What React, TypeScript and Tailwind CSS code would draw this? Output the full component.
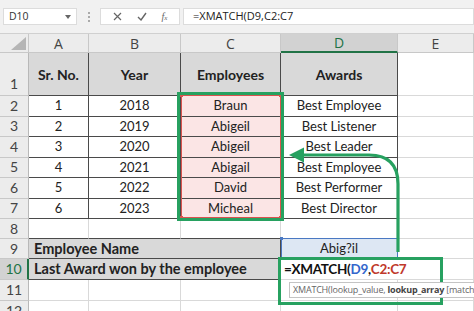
import React from "react"

const data = [
  ["1", "2018", "Braun", "Best Employee"],
  ["2", "2019", "Abigeil", "Best Listener"],
  ["3", "2020", "Abigeil", "Best Leader"],
  ["4", "2021", "Abigail", "Best Employee"],
  ["5", "2022", "David", "Best Performer"],
  ["6", "2023", "Micheal", "Best Director"],
]

const dark = "border-[#4a4a4a]"
const grid = "border-[#d9d9d9]"

function RowHead({ n, active = false, bottom = false }: { n: string; active?: boolean; bottom?: boolean }) {
  return (
    <div
      className={`flex justify-center text-[14px] leading-none font-['Lato',sans-serif] border-b border-[#c8c8c8] ${
        bottom ? "items-end pb-[4px]" : "items-center"
      } ${active ? "bg-[#d2d2d2] text-[#217346] border-r-2 border-r-[#217346]" : "bg-[#ececec] text-[#444] border-r border-r-[#b8b8b8]"}`}
    >
      {n}
    </div>
  )
}

function Cell({ children, className = "" }: { children?: React.ReactNode; className?: string }) {
  return (
    <div className={`flex items-center justify-center border-r border-b text-[13px] text-[#222] whitespace-nowrap ${className}`}>
      {children}
    </div>
  )
}

function FormulaBar() {
  return (
    <div className="h-[33px] bg-[#f1f1f1] flex items-start pt-[8px] pl-[3px] font-['Open_Sans',sans-serif]">
      <div className="w-[74px] h-[17px] bg-white border border-[#dcdcdc] flex items-center justify-between px-[5px] text-[10.5px] text-[#333]">
        <span>D10</span>
        <svg width="6" height="4" viewBox="0 0 6 4">
          <path d="M0 0 L6 0 L3 4 Z" fill="#666" />
        </svg>
      </div>
      <div className="w-[23px] h-[17px] flex flex-col items-center justify-center gap-[2px]">
        <span className="w-[2px] h-[2px] bg-[#aaa]" />
        <span className="w-[2px] h-[2px] bg-[#aaa]" />
        <span className="w-[2px] h-[2px] bg-[#aaa]" />
      </div>
      <div className="w-[80px] h-[17px] bg-white border border-[#dcdcdc] flex items-center justify-around px-[4px] text-[#555]">
        <svg width="9" height="9" viewBox="0 0 9 9">
          <path d="M1 1 L8 8 M8 1 L1 8" stroke="#666" strokeWidth="1.2" />
        </svg>
        <svg width="10" height="9" viewBox="0 0 10 9">
          <path d="M1 5 L4 8 L9 1" stroke="#666" strokeWidth="1.4" fill="none" />
        </svg>
        <span className="text-[10px] italic font-['Liberation_Serif',serif] text-[#666]">
          f<span className="text-[7px]">x</span>
        </span>
      </div>
      <div className="ml-[3px] flex-1 h-[17px] bg-white border border-[#dcdcdc] flex items-center pl-[9px] text-[11px] text-[#222]">
        =XMATCH(D9,C2:C7
      </div>
    </div>
  )
}

export default function App() {
  return (
    <div className="relative w-[474px] h-[311px] overflow-hidden bg-white font-['Lato',sans-serif]">
      <FormulaBar />
      <div className="grid grid-cols-[29px_60px_92px_100px_117px_76px] grid-rows-[19px_43px_repeat(6,20.5px)_20px_20px_21px_21px_21px] border-t border-[#d0d0d0]">
        {/* column headers */}
        <div className="bg-[#ececec] border-r border-b border-[#c8c8c8] flex items-end justify-end pr-[2px] pb-[2px]">
          <svg width="15" height="13" viewBox="0 0 15 13">
            <path d="M15 0 L15 13 L0 13 Z" fill="#b5b5b5" />
          </svg>
        </div>
        {["A", "B", "C", "D", "E"].map((c) => (
          <div
            key={c}
            className={`flex items-center justify-center text-[14px] font-['Open_Sans',sans-serif] border-r border-[#c8c8c8] ${
              c === "D" ? "bg-[#d2d2d2] text-[#217346] border-b-2 border-b-[#217346]" : "bg-[#ececec] text-[#444] border-b border-b-[#c8c8c8]"
            }`}
          >
            {c}
          </div>
        ))}

        {/* row 1 */}
        <RowHead n="1" bottom />
        {["Sr. No.", "Year", "Employees", "Awards"].map((t) => (
          <Cell key={t} className={`bg-[#d9d9d9] font-bold text-[14px] text-[#111] ${dark}`}>
            {t}
          </Cell>
        ))}
        <Cell className={grid} />

        {/* rows 2-7 */}
        {data.map((r, i) => (
          <React.Fragment key={i}>
            <RowHead n={String(i + 2)} />
            <Cell className={dark}>{r[0]}</Cell>
            <Cell className={dark}>{r[1]}</Cell>
            <Cell className={`${dark} bg-[#fbe5e5]`}>{r[2]}</Cell>
            <Cell className={dark}>{r[3]}</Cell>
            <Cell className={grid} />
          </React.Fragment>
        ))}

        {/* row 8 */}
        <RowHead n="8" />
        <Cell className={`border-r-[#d9d9d9] ${dark}`} />
        <Cell className={`border-r-[#d9d9d9] ${dark}`} />
        <Cell className={`border-r-[#d9d9d9] ${dark}`} />
        <Cell className={grid} />
        <Cell className={grid} />

        {/* row 9 */}
        <RowHead n="9" />
        <Cell className={`col-span-3 justify-start pl-[5px] bg-[#d9d9d9] font-bold text-[14.5px] text-[#111] ${dark}`}>
          Employee Name
        </Cell>
        <Cell className="bg-[#dde7f3] border-[#d9d9d9] text-[13.5px]">Abig?il</Cell>
        <Cell className={grid} />

        {/* row 10 */}
        <RowHead n="10" active />
        <Cell className={`col-span-3 justify-start pl-[5px] bg-[#d9d9d9] font-bold text-[14.5px] text-[#111] ${dark}`}>
          Last Award won by the employee
        </Cell>
        <div className="relative border-b border-[#d9d9d9] flex items-center pl-[3px] text-[13.5px] tracking-[-0.3px] font-bold text-[#111] whitespace-nowrap">
          =XMATCH(<span className="text-[#3366cc]">D9</span>,<span className="text-[#c0392b]">C2:C7</span>
          <span className="ml-[1px] w-[1px] h-[15px] bg-[#111]" />
        </div>
        <Cell className={grid} />

        {/* rows 11-12 */}
        {["11", "12"].map((n) => (
          <React.Fragment key={n}>
            <RowHead n={n} />
            <Cell className={grid} />
            <Cell className={grid} />
            <Cell className={grid} />
            <Cell className={grid} />
            <Cell className={grid} />
          </React.Fragment>
        ))}
      </div>

      {/* red reference frame C2:C7 */}
      <div className="absolute left-[181px] top-[95px] w-[100px] h-[123px] border border-[#d9534f] pointer-events-none">
        <span className="absolute -left-[2px] -top-[2px] w-[3px] h-[3px] bg-[#d9534f]" />
        <span className="absolute -right-[2px] -top-[2px] w-[3px] h-[3px] bg-[#d9534f]" />
        <span className="absolute -left-[2px] -bottom-[2px] w-[3px] h-[3px] bg-[#d9534f]" />
        <span className="absolute -right-[2px] -bottom-[2px] w-[3px] h-[3px] bg-[#d9534f]" />
      </div>
      {/* blue reference frame D9 */}
      <div className="absolute left-[281px] top-[238px] w-[117px] h-[21px] border border-[#4a78c2] pointer-events-none">
        <span className="absolute -left-[2px] -top-[2px] w-[3px] h-[3px] bg-[#4a78c2]" />
      </div>

      {/* green annotation boxes */}
      <div className="absolute left-[177px] top-[92px] w-[107px] h-[129px] border-[3px] border-[#27a160]" />
      <div className="absolute left-[278px] top-[257px] w-[165px] h-[48px] border-[3px] border-[#27a160]" />

      {/* function tooltip */}
      <div className="absolute left-[289px] top-[282px] w-[200px] h-[16px] bg-white border border-[#c4c4c4] flex items-center pl-[3px] text-[9px] tracking-[-0.2px] text-[#666] whitespace-nowrap font-['Open_Sans',sans-serif]">
        XMATCH(lookup_value,&nbsp;<span className="font-bold text-[#444]">lookup_array</span>&nbsp;[match_
      </div>

      {/* arrow */}
      <svg className="absolute left-0 top-0 pointer-events-none" width="474" height="311" viewBox="0 0 474 311">
        <path d="M398 252 L398 184 Q398 155 369 155 L302 155" stroke="#27a160" strokeWidth="3.2" fill="none" />
        <path d="M289 155 L304 147.5 L304 162.5 Z" fill="#27a160" />
      </svg>
    </div>
  )
}
